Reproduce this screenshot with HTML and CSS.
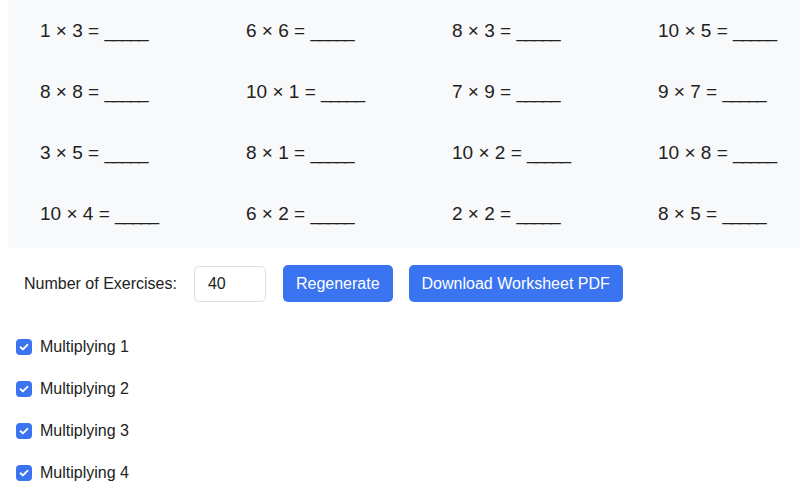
FILE: index.html
```html
<!DOCTYPE html>
<html>
<head>
<meta charset="utf-8">
<link rel="stylesheet" href="styles.css">
</head>
<body>
<div class="sheet">
  <div class="grid">
    <div class="cell">1 × 3 = <span class="blank">_____</span></div>
    <div class="cell">6 × 6 = <span class="blank">_____</span></div>
    <div class="cell">8 × 3 = <span class="blank">_____</span></div>
    <div class="cell">10 × 5 = <span class="blank">_____</span></div>
    <div class="cell">8 × 8 = <span class="blank">_____</span></div>
    <div class="cell">10 × 1 = <span class="blank">_____</span></div>
    <div class="cell">7 × 9 = <span class="blank">_____</span></div>
    <div class="cell">9 × 7 = <span class="blank">_____</span></div>
    <div class="cell">3 × 5 = <span class="blank">_____</span></div>
    <div class="cell">8 × 1 = <span class="blank">_____</span></div>
    <div class="cell">10 × 2 = <span class="blank">_____</span></div>
    <div class="cell">10 × 8 = <span class="blank">_____</span></div>
    <div class="cell">10 × 4 = <span class="blank">_____</span></div>
    <div class="cell">6 × 2 = <span class="blank">_____</span></div>
    <div class="cell">2 × 2 = <span class="blank">_____</span></div>
    <div class="cell">8 × 5 = <span class="blank">_____</span></div>
  </div>
</div>
<div class="controls">
  <label class="count-label" for="count">Number of Exercises:</label>
  <input id="count" class="count-input" type="text" value="40">
  <button class="btn btn-first">Regenerate</button>
  <button class="btn">Download Worksheet PDF</button>
</div>
<div class="options">
  <label class="option"><span class="check"><svg viewBox="0 0 16 16" width="16" height="16"><path d="M4.6 8.2l2.3 2.2 4.5-4.6" fill="none" stroke="#fff" stroke-width="1.9" stroke-linecap="round" stroke-linejoin="round"/></svg></span>Multiplying 1</label>
  <label class="option"><span class="check"><svg viewBox="0 0 16 16" width="16" height="16"><path d="M4.6 8.2l2.3 2.2 4.5-4.6" fill="none" stroke="#fff" stroke-width="1.9" stroke-linecap="round" stroke-linejoin="round"/></svg></span>Multiplying 2</label>
  <label class="option"><span class="check"><svg viewBox="0 0 16 16" width="16" height="16"><path d="M4.6 8.2l2.3 2.2 4.5-4.6" fill="none" stroke="#fff" stroke-width="1.9" stroke-linecap="round" stroke-linejoin="round"/></svg></span>Multiplying 3</label>
  <label class="option"><span class="check"><svg viewBox="0 0 16 16" width="16" height="16"><path d="M4.6 8.2l2.3 2.2 4.5-4.6" fill="none" stroke="#fff" stroke-width="1.9" stroke-linecap="round" stroke-linejoin="round"/></svg></span>Multiplying 4</label>
</div>
</body>
</html>
```
FILE: styles.css
```css
html {
  overflow: hidden;
}
body {
  margin: 0 0 0 8px;
  font-family: "Liberation Sans", Arial, sans-serif;
  font-size: 16px;
  color: #222;
  background: #fff;
}
.sheet {
  background: #f8f9fb;
  padding: 9px 16px 13px;
}
.grid {
  display: grid;
  grid-template-columns: repeat(4, 190px);
  column-gap: 16px;
  row-gap: 18px;
}
.cell {
  font-size: 19px;
  line-height: 27px;
  padding: 8px 16px;
  white-space: nowrap;
}
.blank {
  letter-spacing: -2.2px;
}
.controls {
  display: flex;
  align-items: center;
  gap: 16px;
  padding: 0 16px;
  margin-top: 17px;
  height: 37px;
}
.count-input {
  box-sizing: border-box;
  width: 72px;
  height: 36px;
  margin-left: 1px;
  border: 1px solid #dedede;
  border-radius: 5px;
  padding: 0 13px;
  font: inherit;
  color: #222;
  background: #fff;
  outline: none;
}
.btn {
  height: 37px;
  padding: 0 13px;
  border: none;
  border-radius: 5px;
  background: #3a74f1;
  color: #fff;
  font: inherit;
  cursor: pointer;
}
.btn-first {
  margin-left: 1px;
}
.options {
  margin-top: 24px;
  padding-left: 8px;
}
.option {
  display: flex;
  align-items: center;
  gap: 8px;
  height: 42px;
}
.check {
  width: 16px;
  height: 16px;
  border-radius: 4px;
  background: #3a74f1;
  display: flex;
}
```
